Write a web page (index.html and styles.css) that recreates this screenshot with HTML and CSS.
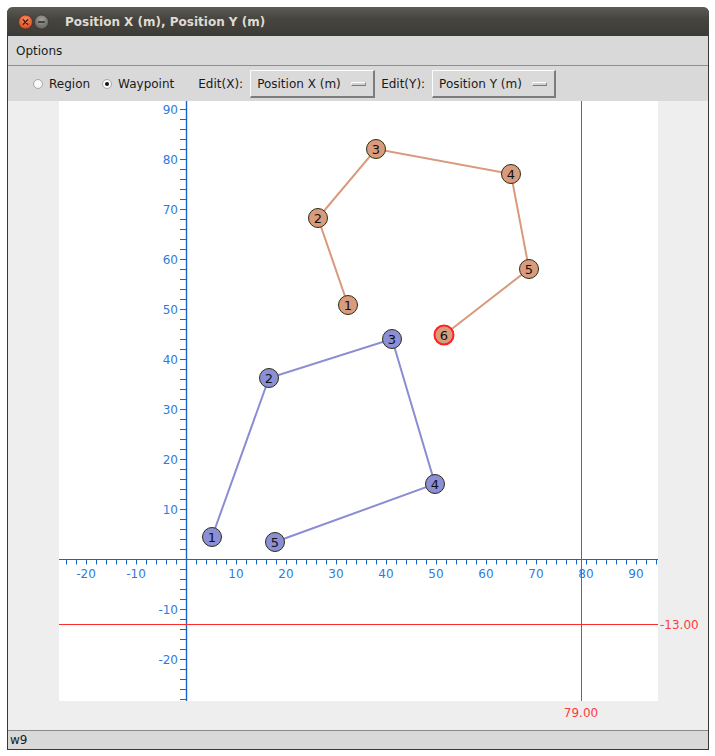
FILE: index.html
```html
<!DOCTYPE html>
<html>
<head>
<meta charset="utf-8">
<link rel="stylesheet" href="styles.css">
</head>
<body>
<div class="window">
  <div class="titlebar">
    <svg class="wbtns" width="34" height="16" viewBox="0 0 34 16">
      <defs>
        <radialGradient id="gc" cx="50%" cy="35%" r="65%"><stop offset="0" stop-color="#f7926a"/><stop offset="1" stop-color="#d9461a"/></radialGradient>
        <radialGradient id="gm" cx="50%" cy="35%" r="65%"><stop offset="0" stop-color="#a3a19b"/><stop offset="1" stop-color="#64635e"/></radialGradient>
      </defs>
      <circle cx="7.5" cy="8" r="7" fill="url(#gc)" stroke="#3a2a22" stroke-width="0.6"/>
      <path d="M5.3 5.8l4.4 4.4M9.7 5.8l-4.4 4.4" stroke="#4a1a0a" stroke-width="1.4" stroke-linecap="round"/>
      <circle cx="23.5" cy="8" r="7" fill="url(#gm)" stroke="#2e2d2a" stroke-width="0.6"/>
      <path d="M20.8 8h5.4" stroke="#2b2a27" stroke-width="1.6" stroke-linecap="round"/>
    </svg>
    <span class="title">Position X (m), Position Y (m)</span>
  </div>
  <div class="menubar"><span class="menu">Options</span></div>
  <div class="toolbar">
    <span class="radio r1"></span><span class="rlabel">Region</span>
    <span class="radio r2 checked"></span><span class="rlabel">Waypoint</span>
    <span class="elabel e1">Edit(X):</span>
    <span class="combo c1"><span class="ctext">Position X (m)</span><span class="carrow"></span></span>
    <span class="elabel e2">Edit(Y):</span>
    <span class="combo c2"><span class="ctext">Position Y (m)</span><span class="carrow"></span></span>
  </div>
  <div class="plot">
    <svg width="700" height="629" viewBox="8 101 700 629">
      <rect x="59" y="101" width="599" height="600" fill="#ffffff"/>
      <!-- axes -->
      <g stroke="#1466cc" fill="none">
        <line x1="59" y1="559.5" x2="658" y2="559.5" stroke-width="1.2"/>
        <line x1="186.5" y1="101" x2="186.5" y2="701" stroke-width="1.4"/>
        <line x1="66" y1="562" x2="658" y2="562" stroke-width="5" stroke-dasharray="1 9"/>
        <line x1="183" y1="109" x2="183" y2="701" stroke-width="6" stroke-dasharray="1 9"/>
      </g>
      <g class="axlbl" text-anchor="middle">
        <text x="86" y="578">-20</text>
        <text x="136" y="578">-10</text>
        <text x="236" y="578">10</text>
        <text x="286" y="578">20</text>
        <text x="336" y="578">30</text>
        <text x="386" y="578">40</text>
        <text x="436" y="578">50</text>
        <text x="486" y="578">60</text>
        <text x="536" y="578">70</text>
        <text x="586" y="578">80</text>
        <text x="636" y="578">90</text>
      </g>
      <g class="axlbl" text-anchor="end">
        <text x="178" y="114">90</text>
        <text x="178" y="164">80</text>
        <text x="178" y="214">70</text>
        <text x="178" y="264">60</text>
        <text x="178" y="314">50</text>
        <text x="178" y="364">40</text>
        <text x="178" y="414">30</text>
        <text x="178" y="464">20</text>
        <text x="178" y="514">10</text>
        <text x="178" y="614">-10</text>
        <text x="178" y="664">-20</text>
      </g>
      <!-- crosshair -->
      <g stroke="#ff2a2a" stroke-width="1">
        <line x1="59" y1="624.5" x2="658" y2="624.5"/>
        <line x1="581.5" y1="101" x2="581.5" y2="701"/>
      </g>
      <text class="redlbl" x="660" y="629">-13.00</text>
      <text class="redlbl" x="581" y="717" text-anchor="middle">79.00</text>
      <!-- orange path -->
      <polyline points="348,305 318,218 376,149 511,174 529,269 444,335" fill="none" stroke="#d8997c" stroke-width="2"/>
      <!-- blue path -->
      <polyline points="212,537 269,378 392,339 435,484 275,542" fill="none" stroke="#8a8dd4" stroke-width="2"/>
      <g class="pt orange">
        <circle cx="348" cy="305" r="9.5"/><text x="348" y="310">1</text>
        <circle cx="318" cy="218" r="9.5"/><text x="318" y="223">2</text>
        <circle cx="376" cy="149" r="9.5"/><text x="376" y="154">3</text>
        <circle cx="511" cy="174" r="9.5"/><text x="511" y="179">4</text>
        <circle cx="529" cy="269" r="9.5"/><text x="529" y="274">5</text>
        <circle class="sel" cx="444" cy="335" r="9.5"/><text x="444" y="340">6</text>
      </g>
      <g class="pt blue">
        <circle cx="212" cy="537" r="9.5"/><text x="212" y="542">1</text>
        <circle cx="269" cy="378" r="9.5"/><text x="269" y="383">2</text>
        <circle cx="392" cy="339" r="9.5"/><text x="392" y="344">3</text>
        <circle cx="435" cy="484" r="9.5"/><text x="435" y="489">4</text>
        <circle cx="275" cy="542" r="9.5"/><text x="275" y="547">5</text>
      </g>
    </svg>
  </div>
  <div class="status">w9</div>
</div>
</body>
</html>
```

FILE: styles.css
```css
html, body {
  margin: 0;
  padding: 0;
  background: #ffffff;
}
body {
  font-family: "DejaVu Sans", "Liberation Sans", sans-serif;
  font-size: 12px;
  color: #1a1a1a;
}
.window {
  margin: 7px 0 0 7px;
  width: 700px;
  border: 1px solid #3a3935;
  border-top: none;
  border-radius: 6px 6px 0 0;
  background: #d9d9d9;
  display: flex;
  flex-direction: column;
}
.titlebar {
  height: 29px;
  margin: 0 -1px;
  border-radius: 6px 6px 0 0;
  background: linear-gradient(#5c5b56, #46453f 40%, #3c3b37);
  display: flex;
  align-items: center;
  box-sizing: border-box;
  padding-left: 11px;
  padding-top: 1px;
}
.wbtns {
  display: block;
}
.title {
  margin-left: 13px;
  font-weight: bold;
  font-size: 12px;
  color: #dfdbd2;
}
.menubar {
  height: 29px;
  border-bottom: 1px solid #8e8e8e;
  background: #d9d9d9;
  display: flex;
  align-items: center;
  padding-left: 8px;
}
.menu {
  color: #1a1a1a;
}
.toolbar {
  height: 35px;
  background: #d9d9d9;
  display: flex;
  align-items: center;
  padding-left: 25px;
  box-sizing: border-box;
  padding-top: 1px;
}
.radio {
  width: 10px;
  height: 10px;
  box-sizing: border-box;
  border-radius: 50%;
  border: 1px solid #a8a8a8;
  background: radial-gradient(circle at 50% 40%, #ffffff, #f0f0f0);
  position: relative;
  flex: none;
}
.radio.r2 {
  margin-left: 12px;
}
.radio.checked::after {
  content: "";
  position: absolute;
  left: 2px;
  top: 2px;
  width: 4px;
  height: 4px;
  border-radius: 50%;
  background: #111111;
}
.rlabel {
  margin-left: 6px;
}
.elabel.e1 {
  margin-left: 24px;
}
.elabel.e2 {
  margin-left: 6px;
}
.combo {
  margin-left: 7px;
  height: 28px;
  box-sizing: border-box;
  border-top: 1px solid #fbfbfb;
  border-left: 1px solid #fbfbfb;
  border-right: 2px solid #7c7c7c;
  border-bottom: 2px solid #7c7c7c;
  background: #dadada;
  display: flex;
  align-items: center;
  padding-left: 6px;
  position: relative;
}
.combo.c1 {
  width: 125px;
}
.combo.c2 {
  width: 124px;
}
.ctext {
  flex: 1;
}
.carrow {
  width: 15px;
  height: 4px;
  box-sizing: border-box;
  border-top: 1px solid #ffffff;
  border-bottom: 1px solid #7a7a7a;
  border-left: 1px solid #f0f0f0;
  border-right: 1px solid #8a8a8a;
  background: #d2d2d2;
  margin-right: 7px;
}
.plot {
  height: 629px;
  background: #eeeeee;
}
.plot svg {
  display: block;
}
.axlbl {
  font-family: "DejaVu Sans", sans-serif;
  font-size: 12px;
  fill: #2f7ae0;
}
.redlbl {
  font-family: "DejaVu Sans", sans-serif;
  font-size: 12px;
  fill: #ff3b3b;
}
.pt circle {
  stroke: #2f2d10;
  stroke-width: 1;
}
.pt.orange circle {
  fill: #d99b7e;
}
.pt.blue circle {
  fill: #8b8fd6;
}
.pt circle.sel {
  stroke: #ff2020;
  stroke-width: 2;
}
.pt text {
  font-family: "DejaVu Sans", sans-serif;
  font-size: 13px;
  fill: #111111;
  text-anchor: middle;
}
.status {
  height: 18px;
  border-top: 1px solid #8a8a8a;
  background: #d9d9d9;
  display: flex;
  align-items: center;
  padding-left: 2px;
}
```
